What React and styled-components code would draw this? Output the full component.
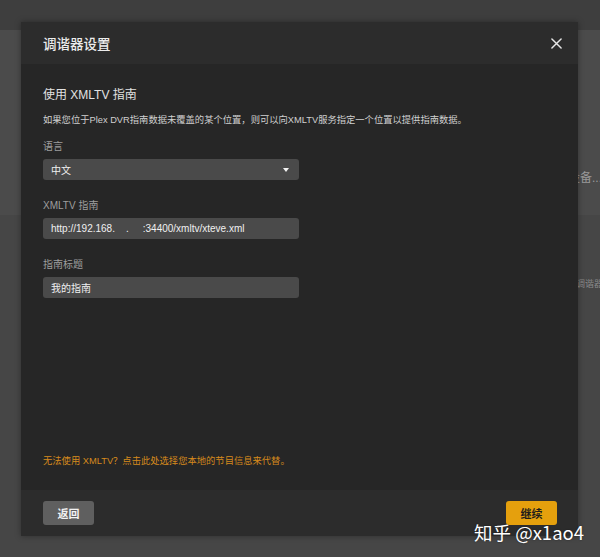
import styled, { createGlobalStyle } from "styled-components";

const GlobalStyle = createGlobalStyle`
    html, body {
        margin: 0;
        padding: 0;
        background: #464646;
    }
    body {
        width: 600px;
        height: 557px;
        overflow: hidden;
        font-family: "Liberation Sans", "Noto Sans CJK SC", sans-serif;
    }
`

const Page = styled.div`
    position: relative;
    width: 600px;
    height: 557px;
    overflow: hidden;
    display: flex;
    flex-direction: column;
    background: #464646;
`

const TopBar = styled.div`
    height: 30px;
    flex-shrink: 0;
    background: #3e3e3e;
`

const Panel = styled.div`
    height: 185px;
    flex-shrink: 0;
    box-sizing: border-box;
    display: flex;
    align-items: flex-end;
    padding: 0 0 30px 568px;
    background: #4b4b4b;
    color: #9a9a9a;
    font-size: 12px;
    white-space: nowrap;
    overflow: hidden;
`

const PanelRow = styled.div`
    padding: 62px 0 0 576px;
    color: #8a8a8a;
    font-size: 9px;
    white-space: nowrap;
    overflow: hidden;
`

const Modal = styled.div`
    position: absolute;
    left: 21px;
    top: 22px;
    width: 557px;
    height: 514px;
    display: flex;
    flex-direction: column;
    background: #262626;
    box-shadow: 0 0 6px rgba(0, 0, 0, 0.35);
`

const Header = styled.div`
    height: 42px;
    flex-shrink: 0;
    display: flex;
    align-items: center;
    justify-content: space-between;
    padding: 0 16px 0 22px;
    background: #2c2c2c;
`

const Title = styled.h2`
    margin: 0;
    font-size: 13.5px;
    font-weight: 500;
    color: #ececec;
    font-family: "Noto Sans CJK SC", sans-serif;
`

const CloseButton = styled.svg`
    width: 11px;
    height: 11px;
    cursor: pointer;
`

const Body = styled.div`
    flex: 1;
    display: flex;
    flex-direction: column;
    padding: 23px 22px 22px;
`

const SectionTitle = styled.h3`
    margin: 0;
    font-size: 12px;
    line-height: 16px;
    font-weight: 400;
    color: #e2e2e2;
`

const Description = styled.p`
    margin: 10px 0 0;
    font-size: 9.3px;
    line-height: 14px;
    color: #d0d0d0;
`

const Label = styled.label`
    display: block;
    margin: ${props => props.$first ? "13px" : "19px"} 0 5px;
    font-size: 10px;
    line-height: 14px;
    color: #9e9e9e;
`

const Field = styled.div`
    position: relative;
    width: 256px;
    height: 21px;
    box-sizing: border-box;
    display: flex;
    align-items: center;
    justify-content: space-between;
    padding: 0 8px;
    border-radius: 3px;
    background: #4a4a4a;
    color: #f0f0f0;
    font-size: 10px;
    white-space: pre;
`

const Caret = styled.span`
    width: 0;
    height: 0;
    border-left: 3px solid transparent;
    border-right: 3px solid transparent;
    border-top: 4px solid #f2f2f2;
    margin-right: 2px;
`

const FallbackLink = styled.a`
    margin-top: auto;
    font-size: 9.3px;
    line-height: 14px;
    color: #d68a1c;
    cursor: pointer;
`

const Footer = styled.div`
    height: 46px;
    flex-shrink: 0;
    display: flex;
    align-items: center;
    justify-content: space-between;
    padding: 0 21px 0 22px;
    background: #2c2c2c;
`

const Button = styled.button`
    width: 51px;
    height: 24px;
    border: none;
    border-radius: 3px;
    background: ${props => props.$primary ? "#e5a00d" : "#5f5f5f"};
    color: ${props => props.$primary ? "#1c1c1c" : "#f2f2f2"};
    font-family: "Noto Sans CJK SC", sans-serif;
    font-size: 11px;
    font-weight: 700;
    cursor: pointer;
`

const Watermark = styled.div`
    position: absolute;
    left: 474px;
    top: 519px;
    color: #ffffff;
    font-family: "Noto Sans CJK SC", sans-serif;
    font-size: 18.5px;
    line-height: 26px;
    white-space: nowrap;
    text-shadow: 0 0 2px rgba(0, 0, 0, 0.4);
`

export default function App() {
    return (
        <Page>
            <GlobalStyle />
            <TopBar />
            <Panel>设备...</Panel>
            <PanelRow>调谐器设置</PanelRow>

            <Modal>
                <Header>
                    <Title>调谐器设置</Title>
                    <CloseButton viewBox="0 0 12 12">
                        <path d="M1 1 L11 11 M11 1 L1 11" stroke="#e6e6e6" strokeWidth="1.6" strokeLinecap="round" />
                    </CloseButton>
                </Header>
                <Body>
                    <SectionTitle>使用 XMLTV 指南</SectionTitle>
                    <Description>如果您位于Plex DVR指南数据未覆盖的某个位置，则可以向XMLTV服务指定一个位置以提供指南数据。</Description>

                    <Label $first>语言</Label>
                    <Field>中文<Caret /></Field>

                    <Label>XMLTV 指南</Label>
                    <Field>{"http://192.168.    .     :34400/xmltv/xteve.xml"}</Field>

                    <Label>指南标题</Label>
                    <Field>我的指南</Field>

                    <FallbackLink>无法使用 XMLTV？点击此处选择您本地的节目信息来代替。</FallbackLink>
                </Body>
                <Footer>
                    <Button>返回</Button>
                    <Button $primary>继续</Button>
                </Footer>
            </Modal>

            <Watermark>知乎 @x1ao4</Watermark>
        </Page>
    );
}
